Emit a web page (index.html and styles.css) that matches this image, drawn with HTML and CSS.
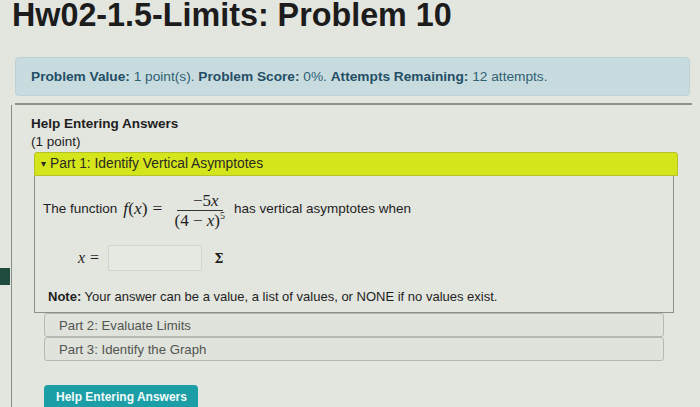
FILE: index.html
```html
<!DOCTYPE html>
<html>
<head>
<meta charset="utf-8">
<link rel="stylesheet" href="styles.css">
</head>
<body>
<div class="page">
  <h1 class="title">Hw02-1.5-Limits: Problem 10</h1>
  <div class="info">
    <b>Problem Value:</b>&nbsp;1 point(s). <b>Problem Score:</b>&nbsp;0%. <b>Attempts Remaining:</b>&nbsp;12 attempts.
  </div>
  <div class="rule"></div>
  <div class="work">
    <div class="side-tab"></div>
    <div class="heading">Help Entering Answers</div>
    <div class="points">(1 point)</div>
    <div class="part open">
      <div class="part-head"><span class="caret">&#9662;</span>Part 1: Identify Vertical Asymptotes</div>
      <div class="part-body">
        <div class="statement">
          <span>The function</span>
          <span class="math"><i>f</i>(<i>x</i>)<span class="eq">=</span></span>
          <span class="frac"><span class="num">&minus;5<i>x</i></span><span class="den">(4 &minus; <i>x</i>)<sup>5</sup></span></span>
          <span class="tail">has vertical asymptotes when</span>
        </div>
        <div class="answer">
          <span class="math"><i>x</i><span class="eq">=</span></span>
          <span class="input"></span>
          <span class="sigma">&Sigma;</span>
        </div>
        <div class="note"><b>Note:</b> Your answer can be a value, a list of values, or NONE if no values exist.</div>
      </div>
    </div>
    <div class="part closed"><div class="part-head">Part 2: Evaluate Limits</div></div>
    <div class="part closed"><div class="part-head">Part 3: Identify the Graph</div></div>
    <div class="btn">Help Entering Answers</div>
  </div>
</div>
</body>
</html>
```
FILE: styles.css
```css
html, body {
  margin: 0;
  height: 100%;
}
body {
  background: #e3e5df;
  font-family: "Liberation Sans", Arial, sans-serif;
  color: #1e1e1e;
  overflow: hidden;
}
.page {
  padding: 0 8px 0 15px;
  position: relative;
}
.title {
  margin: 0 0 0 -3px;
  font-size: 32.3px;
  line-height: 30px;
  font-weight: bold;
  color: #1c1c1c;
}
.info {
  margin-top: 27px;
  width: 675px;
  height: 39px;
  box-sizing: border-box;
  padding: 11px 0 0 15px;
  background: #c8dcdf;
  border: 1px solid #bcd2d6;
  border-radius: 4px;
  font-size: 13.7px;
  color: #2f6174;
}
.info b {
  color: #244e66;
}
.rule {
  margin-top: 7px;
  width: 677px;
  height: 2px;
  background: #8e918d;
}
.work {
  margin-left: -4px;
  border-left: 1px solid #8a8c88;
  padding: 10px 0 0 19px;
  height: 300px;
}
.side-tab {
  position: absolute;
  left: 0;
  top: 268px;
  width: 10px;
  height: 17px;
  background: #1f4b3f;
}
.heading {
  font-weight: bold;
  font-size: 13.5px;
  line-height: 18px;
}
.points {
  font-size: 13.5px;
  line-height: 18px;
  margin-bottom: 1px;
}
.part {
  box-sizing: border-box;
}
.part.open {
  margin-left: 3px;
  width: 644px;
}
.part.open .part-head {
  background: #d5e51c;
  border: 1px solid #b5c22a;
  border-radius: 3px 3px 0 0;
  height: 24px;
  box-sizing: border-box;
  padding: 3px 0 0 6px;
  font-size: 13.8px;
  color: #2a2a22;
}
.caret {
  font-size: 10px;
  margin-right: 4px;
  position: relative;
  top: -1px;
}
.part-body {
  border: 1px solid #8d8f8b;
  border-top: none;
  height: 137px;
  box-sizing: border-box;
  padding: 16px 0 0 8px;
  width: 640px;
}
.statement {
  display: flex;
  align-items: center;
  font-size: 13.5px;
}
.math {
  font-family: "Liberation Serif", "Times New Roman", serif;
  font-size: 17.5px;
  margin-left: 6px;
}
.eq {
  margin: 0 5px;
}
.frac {
  display: inline-flex;
  flex-direction: column;
  align-items: center;
  font-family: "Liberation Serif", "Times New Roman", serif;
  font-size: 17px;
  margin: 0 0 -6px 7px;
}
.tail {
  margin-left: 9px;
}
.num {
  border-bottom: 1px solid #333;
  padding: 0 4px 1px 16px;
  line-height: 17px;
}
.den {
  line-height: 18px;
  padding-top: 1px;
}
.den sup {
  font-size: 10px;
  line-height: 0;
}
.answer {
  display: flex;
  align-items: center;
  margin: 21px 0 0 29px;
  gap: 4px;
}
.answer .math {
  font-size: 16px;
}
.input {
  width: 92px;
  height: 24px;
  border: 1px solid #d2d4d0;
  border-radius: 2px;
  background: #e6e8e2;
}
.sigma {
  font-family: "DejaVu Serif", serif;
  font-weight: bold;
  font-size: 13px;
  margin-left: 8px;
}
.note {
  margin: 18px 0 0 5px;
  font-size: 13px;
}
.part.closed {
  margin-left: 13px;
  width: 620px;
  height: 24px;
  border: 1px solid #b6b8b3;
  border-radius: 3px;
  background: #e0e2dc;
}
.part.closed .part-head {
  padding: 4px 0 0 14px;
  font-size: 13.2px;
  color: #505550;
}
.btn {
  margin: 24px 0 0 13px;
  width: 154px;
  height: 26px;
  box-sizing: border-box;
  padding: 5px 0 0 12px;
  background: #1b9ea6;
  border-radius: 4px;
  color: #f2fbfb;
  font-weight: bold;
  font-size: 12px;
}
```
